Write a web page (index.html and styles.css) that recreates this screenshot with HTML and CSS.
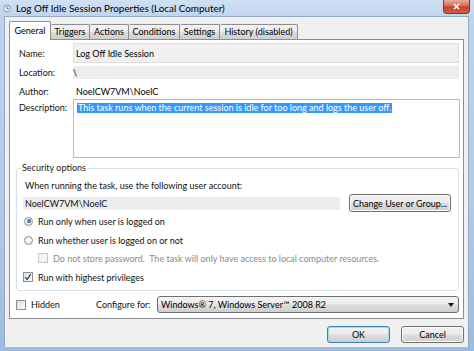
FILE: index.html
```html
<!DOCTYPE html>
<html>
<head>
<meta charset="utf-8">
<link rel="stylesheet" href="styles.css">
</head>
<body>
<div class="window">
  <div class="titlebar">
    <svg class="ticon" width="8" height="9" viewBox="0 0 8 9"><circle cx="4" cy="4.5" r="3.4" fill="#e4eaf1" stroke="#7d93ad" stroke-width="0.9"/><path d="M4 2.4V4.6H5.7" stroke="#3d5f88" stroke-width="0.8" fill="none"/></svg>
    <span class="title">Log Off Idle Session Properties (Local Computer)</span>
    <div class="close"><svg width="9" height="7" viewBox="0 0 9 7"><path d="M2 1L7 6M7 1L2 6" stroke="#fff" stroke-width="1.6"/></svg></div>
  </div>
  <div class="client">
    <div class="tabs">
      <div class="tab sel t-gen">General</div>
      <div class="tab t-trg">Triggers</div>
      <div class="tab t-act">Actions</div>
      <div class="tab t-con">Conditions</div>
      <div class="tab t-set">Settings</div>
      <div class="tab t-his">History (disabled)</div>
    </div>
    <div class="panel">
      <div class="form">
        <div class="lbl r-name">Name:</div>
        <div class="field namebox">Log Off Idle Session</div>
        <div class="lbl r-loc">Location:</div>
        <div class="field locbox">\</div>
        <div class="lbl r-auth">Author:</div>
        <div class="field authbox">NoelCW7VM\NoelC</div>
        <div class="lbl r-desc">Description:</div>
        <div class="field descbox"><span class="selected">This task runs when the current session is idle for too long and logs the user off.</span></div>
      </div>
      <div class="group">
        <div class="group-title">Security options</div>
        <div class="gline">When running the task, use the following user account:</div>
        <div class="userrow">
          <div class="userbox">NoelCW7VM\NoelC</div>
          <div class="btn chg">Change User or Group...</div>
        </div>
        <div class="opt r1"><span class="radio on"></span><span>Run only when user is logged on</span></div>
        <div class="opt r2"><span class="radio"></span><span>Run whether user is logged on or not</span></div>
        <div class="opt r3 disabled"><span class="check dis"></span><span>Do not store password.&nbsp; The task will only have access to local computer resources.</span></div>
        <div class="opt r4"><span class="check"><svg width="8" height="8" viewBox="0 0 8 8"><path d="M1.2 4.2L3.2 6.4L6.8 1.2" stroke="#2b4a78" stroke-width="1.3" fill="none"/></svg></span><span>Run with highest privileges</span></div>
      </div>
      <div class="bottomrow">
        <div class="hidden"><span class="check"></span><span>Hidden</span></div>
        <div class="cfglbl">Configure for:</div>
        <div class="select"><span>Windows® 7, Windows Server™ 2008 R2</span><svg width="6" height="4" viewBox="0 0 6 4"><path d="M0 0H6L3 4Z" fill="#1a1a1a"/></svg></div>
      </div>
    </div>
    <div class="buttons">
      <div class="btn ok">OK</div>
      <div class="btn cancel">Cancel</div>
    </div>
  </div>
</div>
</body>
</html>
```
FILE: styles.css
```css
* { box-sizing: border-box; }
html, body { margin: 0; padding: 0; }
body {
  width: 474px; height: 351px; overflow: hidden;
  font-family: Lato, "Open Sans", sans-serif;
  font-size: 9px; color: #111;
  background: #a9c3e2;
}
.window {
  width: 474px; height: 351px;
  display: flex; flex-direction: column;
  background: linear-gradient(to bottom, #c4d8ef 0, #bcd2ec 30px, #b3cae7 200px, #9dbbe0 100%);
  padding: 0 5px 0 4px;
}
.titlebar {
  height: 16px; display: flex; align-items: center;
  margin: 0 -5px 0 -4px; padding: 0 4px 0 3px;
  background: linear-gradient(to bottom, #cfe0f3, #c0d5ee);
}
.ticon { flex: none; margin-right: 5px; }
.title { font-size: 9.9px; color: #000; line-height: 16px; }
.close {
  margin-left: auto; align-self: flex-start;
  width: 27px; height: 14px;
  border: 1px solid #7a3a32; border-top: none;
  border-radius: 0 0 4px 4px;
  background: linear-gradient(to bottom, #e8ad9f 0, #d77561 40%, #c2442a 55%, #d0623f 100%);
  display: flex; align-items: center; justify-content: center;
}
.client {
  flex: none; height: 331px;
  background: #f0f0f0;
  border: 1px solid #93a9c5; border-bottom: none;
  padding: 4px 4px 0 4px;
  display: flex; flex-direction: column;
}
.tabs { display: flex; align-items: flex-end; height: 18px; position: relative; z-index: 1; }
.tab {
  height: 15px; line-height: 14px; text-align: center;
  border: 1px solid #8c8e94; border-bottom: none; border-left: none;
  background: linear-gradient(to bottom, #f3f3f3, #ebebeb 50%, #dcdcdc 51%, #cfcfcf);
  color: #000;
  border-radius: 2px 2px 0 0;
}
.tab.sel {
  line-height: 17px; background: #fff;
  border-left: 1px solid #8c8e94;
  margin-bottom: -1px; height: 19px;
}
.t-gen { width: 42px; }
.t-trg { width: 39px; }
.t-act { width: 39px; }
.t-con { width: 51px; }
.t-set { width: 40px; }
.t-his { width: 78px; }
.panel {
  width: 455px; height: 280px;
  background: #fff; border: 1px solid #8c8e94;
  padding: 3px 4px 4px 6px;
  display: flex; flex-direction: column;
}
.form {
  display: grid;
  grid-template-columns: 54px 1fr;
  grid-template-rows: 20px 13px 14px 59px;
  row-gap: 3px;
  padding-left: 3px;
}
.form .lbl { display: flex; align-items: center; color: #111; }
.r-desc { align-items: flex-start !important; padding-top: 3px; }
.field { display: flex; align-items: center; color: #000; }
.namebox { background: #f0f0f0; border: 1px solid #dedede; padding-left: 2px; }
.locbox { background: #ececec; padding-left: 0; }
.r-auth, .authbox { margin-top: 2px; margin-bottom: -2px; }
.authbox { padding-left: 3px; }
.descbox {
  align-items: flex-start;
  border: 1px solid #a7bfd8; padding: 3px 3px; margin-right: -1px;
}
.selected { background: #3399ff; color: #fff; line-height: 10px; padding: 0 1px; }
.group {
  margin-top: 10px;
  border: 1px solid #d5dfe5; border-radius: 3px;
  padding: 0 7px 4px 6px;
  display: flex; flex-direction: column; align-items: flex-start;
}
.group-title {
  margin: -7px 0 0 -2px; padding: 0 1px;
  background: #fff; line-height: 12px; color: #1a1a1a;
}
.gline { margin-top: 6px; line-height: 12px; padding-left: 2px; }
.userrow { margin-top: 2px; height: 18px; display: flex; align-items: center; width: 100%; }
.userbox {
  width: 318px; height: 13px; background: #ececec;
  display: flex; align-items: center; padding-left: 2px;
}
.btn {
  display: flex; align-items: center; justify-content: center;
  border: 1px solid #707070; border-radius: 3px;
  background: linear-gradient(to bottom, #f2f2f2 0, #ebebeb 48%, #dddddd 52%, #cfcfcf 100%);
  color: #000;
  box-shadow: inset 0 0 0 1px #fbfbfb;
}
.chg { margin-left: 9px; width: 102px; height: 18px; }
.opt { height: 18px; display: flex; align-items: center; }
.opt.r2, .opt.r4 { margin-top: 1px; }
.opt.r3 { padding-left: 15px; }
.disabled { color: #8a8a8a; }
.radio {
  width: 9px; height: 9px; border-radius: 50%;
  border: 1px solid #8e8f8f;
  background: radial-gradient(circle at 50% 40%, #fff, #dcdcdc);
  margin-right: 5px; flex: none; margin-left: 1px;
  display: flex; align-items: center; justify-content: center;
}
.radio.on::after {
  content: ""; width: 4px; height: 4px; border-radius: 50%;
  background: radial-gradient(circle at 40% 35%, #6b9ed3, #1c3b6a);
}
.check {
  width: 10px; height: 10px; border: 1px solid #8e8f8f;
  background: linear-gradient(135deg, #dcdcdc, #fdfdfd);
  margin-right: 5px; flex: none;
  display: flex; align-items: center; justify-content: center;
}
.check.dis { border-color: #c8c8c8; background: #f4f4f4; }
.bottomrow { margin-top: 5px; height: 17px; display: flex; align-items: center; }
.hidden { width: 80px; display: flex; align-items: center; }
.cfglbl { width: 61px; }
.select {
  flex: 1; height: 17px;
  border: 1px solid #707070; border-radius: 3px;
  background: linear-gradient(to bottom, #f2f2f2 0, #ebebeb 48%, #dddddd 52%, #cfcfcf 100%);
  display: flex; align-items: center; justify-content: space-between;
  padding: 0 4px 0 3px; color: #000;
}
.buttons { display: flex; justify-content: flex-end; gap: 11px; margin-top: 7px; }
.buttons .btn { width: 63px; height: 17px; }
.ok { border-color: #3c7fb1; box-shadow: inset 0 0 0 1px #9ddcf7; }
```
